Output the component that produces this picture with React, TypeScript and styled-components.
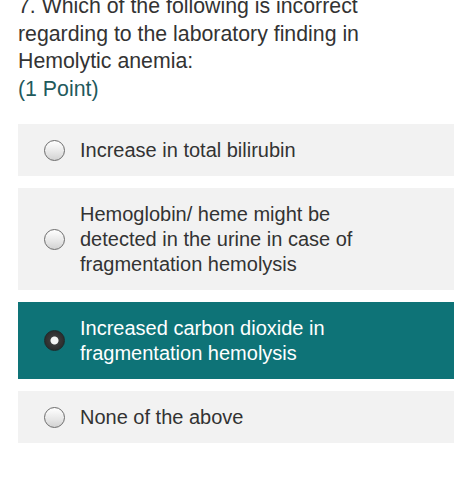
import React from 'react';
import styled, { createGlobalStyle } from 'styled-components';

const GlobalStyle = createGlobalStyle`
  html, body {
    margin: 0;
    padding: 0;
    background: #ffffff;
  }
  body {
    font-family: 'Liberation Sans', Arial, sans-serif;
    color: #333333;
  }
`;

const Page = styled.div`
  width: 473px;
  height: 480px;
  overflow: hidden;
  padding: 0 19px 0 18px;
  box-sizing: border-box;
`;

const Question = styled.div`
  margin-top: -7px;
  max-width: 400px;
  font-size: 21.3px;
  line-height: 27.5px;
  color: #333333;
`;

const Points = styled.div`
  color: #1f5a5c;
`;

const Options = styled.div`
  display: flex;
  flex-direction: column;
  gap: 12px;
  margin-top: 21px;
`;

const Option = styled.div<{ $selected?: boolean }>`
  display: flex;
  align-items: center;
  gap: 15px;
  padding: 13.5px 20px 13.5px 26px;
  background: ${(p) => (p.$selected ? '#0e7377' : '#f2f2f2')};
  color: ${(p) => (p.$selected ? '#ffffff' : '#333333')};
  font-size: 20px;
  line-height: 25px;
`;

const Label = styled.span`
  max-width: 295px;
`;

const Radio = styled.span<{ $selected?: boolean }>`
  flex: none;
  width: 21px;
  height: 21px;
  border-radius: 50%;
  box-sizing: border-box;
  border: 1.5px solid ${(p) => (p.$selected ? '#1e2a2a' : '#6c6c6c')};
  background: ${(p) =>
    p.$selected
      ? 'radial-gradient(circle, #f4f4f4 0 3.5px, #3a3a3a 4.5px, #222 100%)'
      : 'linear-gradient(180deg, #ffffff 0%, #e6e6e6 60%, #d2d2d2 100%)'};
`;

const options = [
  { text: 'Increase in total bilirubin' },
  { text: 'Hemoglobin/ heme might be detected in the urine in case of fragmentation hemolysis' },
  { text: 'Increased carbon dioxide in fragmentation hemolysis', selected: true },
  { text: 'None of the above' },
];

const App = () => (
  <Page>
    <GlobalStyle />
    <Question>
      7. Which of the following is incorrect regarding to the laboratory finding in Hemolytic anemia:
      <Points>(1 Point)</Points>
    </Question>
    <Options>
      {options.map((o) => (
        <Option key={o.text} $selected={o.selected}>
          <Radio $selected={o.selected} />
          <Label>{o.text}</Label>
        </Option>
      ))}
    </Options>
  </Page>
);

export default App;
